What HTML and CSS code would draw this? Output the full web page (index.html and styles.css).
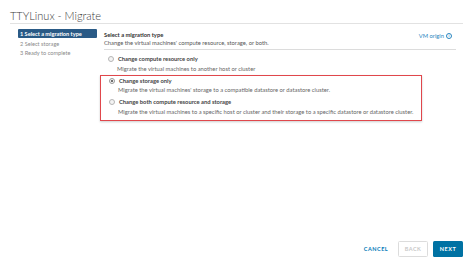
FILE: index.html
```html
<!DOCTYPE html>
<html lang="en">
<head>
    <meta charset="UTF-8">
    <title>TTYLinux - Migrate</title>
    <link rel="stylesheet" href="styles.css">
</head>
<body>
    <div class="wizard">
        <div class="wizard-title">TTYLinux - Migrate</div>

        <div class="wizard-body">
            <nav class="steps">
                <div class="step active">1 Select a migration type</div>
                <div class="step">2 Select storage</div>
                <div class="step">3 Ready to complete</div>
            </nav>

            <main class="content">
                <div class="content-head">
                    <div>
                        <div class="head-title">Select a migration type</div>
                        <div class="head-sub">Change the virtual machines' compute resource, storage, or both.</div>
                    </div>
                    <a class="vm-origin">VM origin <span class="info">i</span></a>
                </div>

                <div class="option">
                    <div class="option-label"><span class="radio"></span>Change compute resource only</div>
                    <div class="option-desc">Migrate the virtual machines to another host or cluster</div>
                </div>

                <div class="highlight">
                    <div class="option">
                        <div class="option-label"><span class="radio checked"></span>Change storage only</div>
                        <div class="option-desc">Migrate the virtual machines' storage to a compatible datastore or datastore cluster.</div>
                    </div>
                    <div class="option">
                        <div class="option-label"><span class="radio"></span>Change both compute resource and storage</div>
                        <div class="option-desc">Migrate the virtual machines to a specific host or cluster and their storage to a specific datastore or datastore cluster.</div>
                    </div>
                </div>
            </main>
        </div>

        <div class="footer">
            <button class="btn btn-link">CANCEL</button>
            <button class="btn btn-outline" disabled>BACK</button>
            <button class="btn btn-primary">NEXT</button>
        </div>
    </div>
</body>
</html>
```

FILE: styles.css
```css
body {
    margin: 0;
    background-color: white;
    font-family: 'Lato', 'Liberation Sans', sans-serif;
    color: #333;
}

.wizard {
    width: 474px;
    height: 267px;
    box-sizing: border-box;
    padding: 10px 11px 10px 10px;
    display: flex;
    flex-direction: column;
}

.wizard-title {
    font-size: 11px;
    line-height: 12px;
    font-weight: 300;
    color: #3a3a3a;
    padding-bottom: 1px;
    border-bottom: 1px solid #e2e2e2;
}

.wizard-body {
    display: flex;
    flex-grow: 1;
}

.steps {
    width: 88px;
    padding-top: 5px;
    padding-left: 8px;
    box-sizing: border-box;
}

.step {
    font-size: 5.6px;
    line-height: 9px;
    color: #8a8a8a;
    padding-left: 2px;
    margin-bottom: 0.5px;
}

.step.active {
    width: 79px;
    box-sizing: border-box;
    background-color: #2a5a86;
    color: white;
    font-weight: bold;
    border-radius: 1px;
}

.content {
    flex-grow: 1;
    padding-left: 6px;
    padding-top: 7px;
}

.content-head {
    display: flex;
    justify-content: space-between;
    align-items: flex-start;
    border-bottom: 1px solid #dcdcdc;
    padding-bottom: 2px;
    margin-right: 7px;
}

.head-title {
    font-size: 5.8px;
    line-height: 8px;
    font-weight: bold;
    color: #333;
}

.head-sub {
    font-size: 5.8px;
    line-height: 8px;
    color: #565656;
}

.vm-origin {
    font-size: 5.8px;
    line-height: 8px;
    color: #2a86c0;
    display: flex;
    align-items: center;
    gap: 2px;
    padding-top: 1px;
    margin-right: 4px;
}

.info {
    width: 4px;
    height: 4px;
    border: 0.6px solid #2a86c0;
    border-radius: 50%;
    font-size: 3.5px;
    line-height: 4px;
    text-align: center;
    font-weight: bold;
}

.option {
    padding-left: 4px;
    margin-top: 5px;
}

.option-label {
    font-size: 5.8px;
    line-height: 8px;
    font-weight: bold;
    color: #444;
    display: flex;
    align-items: center;
}

.option-desc {
    font-size: 5.8px;
    line-height: 8px;
    color: #666;
    padding-left: 9px;
    margin-top: 1.5px;
}

.radio {
    width: 4px;
    height: 4px;
    border: 0.6px solid #b5b5b5;
    border-radius: 50%;
    margin-right: 4px;
    background-color: #f4f4f4;
    position: relative;
}

.radio.checked {
    border-color: #9a9a9a;
}

.radio.checked::after {
    content: '';
    position: absolute;
    top: 1px;
    left: 1px;
    width: 2px;
    height: 2px;
    border-radius: 50%;
    background-color: #444;
}

.highlight {
    width: 322px;
    box-sizing: border-box;
    margin-top: 2px;
    margin-left: -4px;
    border: 1.5px solid #e0474c;
    padding: 0 0 4px 4px;
    box-shadow: 0 1px 2px rgba(0, 0, 0, 0.2);
}

.highlight .option {
    margin-top: 4px;
}

.highlight .option:first-child {
    margin-top: 1px;
}

.footer {
    display: flex;
    justify-content: flex-end;
    align-items: center;
    gap: 5px;
}

.btn {
    font-family: 'Lato', 'Liberation Sans', sans-serif;
    font-size: 5.5px;
    font-weight: bold;
    letter-spacing: 0.5px;
    height: 16px;
    width: 30px;
    padding: 0;
    border-radius: 1.5px;
    border: 1px solid transparent;
}

.btn-link {
    background: none;
    color: #0079b8;
    width: 30px;
    margin-right: 2px;
}

.btn-outline {
    background: white;
    border-color: #dcdcdc;
    color: #c8c8c8;
}

.btn-primary {
    background-color: #0072a3;
    color: white;
}
```
